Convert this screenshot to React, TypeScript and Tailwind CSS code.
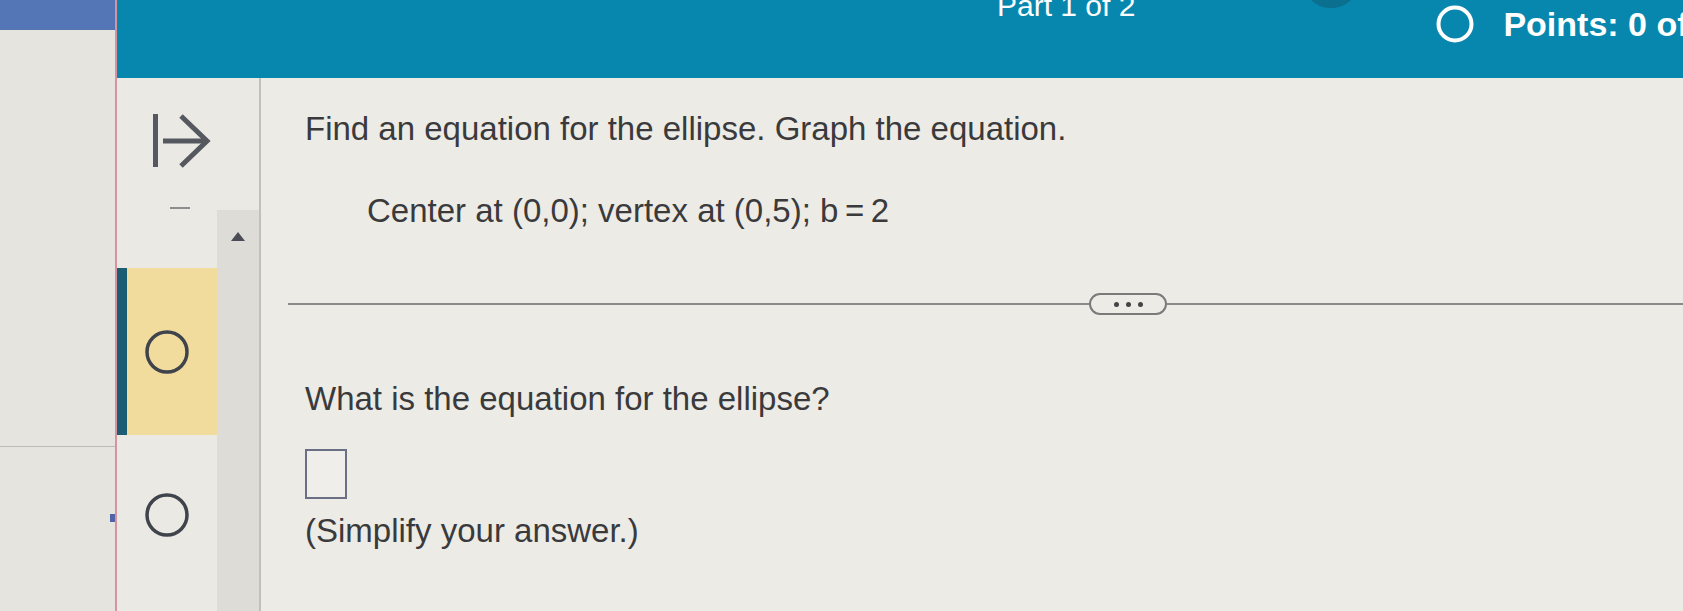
import React from "react";

function Ring({ size = 46 }: { size?: number }) {
  return (
    <svg width={size} height={size} viewBox="0 0 46 46">
      <circle cx="23" cy="23" r="20" fill="none" stroke="#3e434c" strokeWidth="3.5" />
    </svg>
  );
}

export default function App() {
  return (
    <div
      className="w-[1683px] h-[611px] overflow-hidden flex bg-[#ebe9e4] text-[#3a3a3c]"
      style={{ fontFamily: '"Liberation Sans", Arial, sans-serif' }}
    >
      {/* far-left strip */}
      <div className="w-[117px] shrink-0 flex flex-col border-r-2 border-[#d9939f] bg-[#e6e4df]">
        <div className="h-[30px] bg-[#5576b6]" />
        <div className="h-[417px] border-b border-[#bcbab5]" />
        <div className="flex justify-end pt-[67px]">
          <div className="w-[5px] h-[8px] bg-[#5264a8]" />
        </div>
      </div>

      {/* main column */}
      <div className="flex-1 flex flex-col min-w-0">
        {/* header */}
        <div className="relative h-[78px] bg-[#0887ae] flex items-start text-white shrink-0 overflow-hidden">
          <div className="ml-[880px] mt-[-12px] text-[30px] leading-[36px] whitespace-nowrap shrink-0">Part 1 of 2</div>
          <div className="absolute left-[1186px] top-[-46px] w-[56px] h-[54px] rounded-full bg-[#0b6f8f]" />
          <div className="ml-[300px] mt-[4px] flex items-center gap-[28px] shrink-0">
            <svg width="40" height="40" viewBox="0 0 40 40">
              <circle cx="20" cy="20" r="16.5" fill="none" stroke="white" strokeWidth="4" />
            </svg>
            <div className="font-bold text-[34px] leading-[40px] whitespace-nowrap">Points: 0 of 1</div>
          </div>
        </div>

        <div className="flex-1 flex min-h-0">
          {/* left nav panel */}
          <div className="w-[144px] shrink-0 border-r-2 border-[#c2c0bb] flex flex-col">
            <div className="h-[132px] relative">
              <svg className="ml-[33px] mt-[35px]" width="62" height="56" viewBox="0 0 62 56">
                <line x1="5.5" y1="1" x2="5.5" y2="54" stroke="#55585f" strokeWidth="5" />
                <line x1="13" y1="28" x2="57" y2="28" stroke="#55585f" strokeWidth="5" />
                <polyline points="31,3 57,28 31,53" fill="none" stroke="#55585f" strokeWidth="5" strokeLinejoin="miter" />
              </svg>
              <div className="ml-[53px] mt-[38px] w-[20px] h-[2px] bg-[#8d8d8d]" />
            </div>
            <div className="flex-1 flex">
              <div className="w-[100px] flex flex-col">
                <div className="mt-[58px] h-[167px] flex bg-[#f1dc9e]">
                  <div className="w-[10px] bg-[#1c5d74]" />
                  <div className="flex-1 flex items-center justify-center pr-[10px]">
                    <Ring />
                  </div>
                </div>
                <div className="h-[160px] flex items-center justify-center pl-[10px] pr-[10px]">
                  <Ring />
                </div>
              </div>
              <div className="flex-1 bg-[#dedcd7] pt-[22px] flex justify-center">
                <svg width="14" height="9" viewBox="0 0 14 9">
                  <polygon points="7,0 14,9 0,9" fill="#4a4d55" />
                </svg>
              </div>
            </div>
          </div>

          {/* content */}
          <div className="flex-1 flex flex-col pt-[31px] bg-[#ecebe6]">
            <div className="pl-[44px] text-[33px] leading-[40px]">Find an equation for the ellipse. Graph the equation.</div>
            <div className="pl-[106px] mt-[42px] text-[33px] leading-[40px]">Center at (0,0); vertex at (0,5); b&thinsp;=&thinsp;2</div>
            <div className="ml-[27px] mt-[62px] flex items-center">
              <div className="w-[801px] h-[2px] bg-[#8a8a8a]" />
              <div className="w-[78px] h-[22px] rounded-full border-2 border-[#7a7a7a] flex items-center justify-center gap-[7px]">
                <div className="w-[5px] h-[5px] rounded-full bg-[#444]" />
                <div className="w-[5px] h-[5px] rounded-full bg-[#444]" />
                <div className="w-[5px] h-[5px] rounded-full bg-[#444]" />
              </div>
              <div className="flex-1 h-[2px] bg-[#8a8a8a]" />
            </div>
            <div className="pl-[44px] mt-[64px] text-[33px] leading-[40px]">What is the equation for the ellipse?</div>
            <div className="ml-[44px] mt-[30px] w-[42px] h-[50px] border-2 border-[#6b6f86] bg-[#efeeea]" />
            <div className="pl-[44px] mt-[12px] text-[33px] leading-[40px]">(Simplify your answer.)</div>
          </div>
        </div>
      </div>
    </div>
  );
}
